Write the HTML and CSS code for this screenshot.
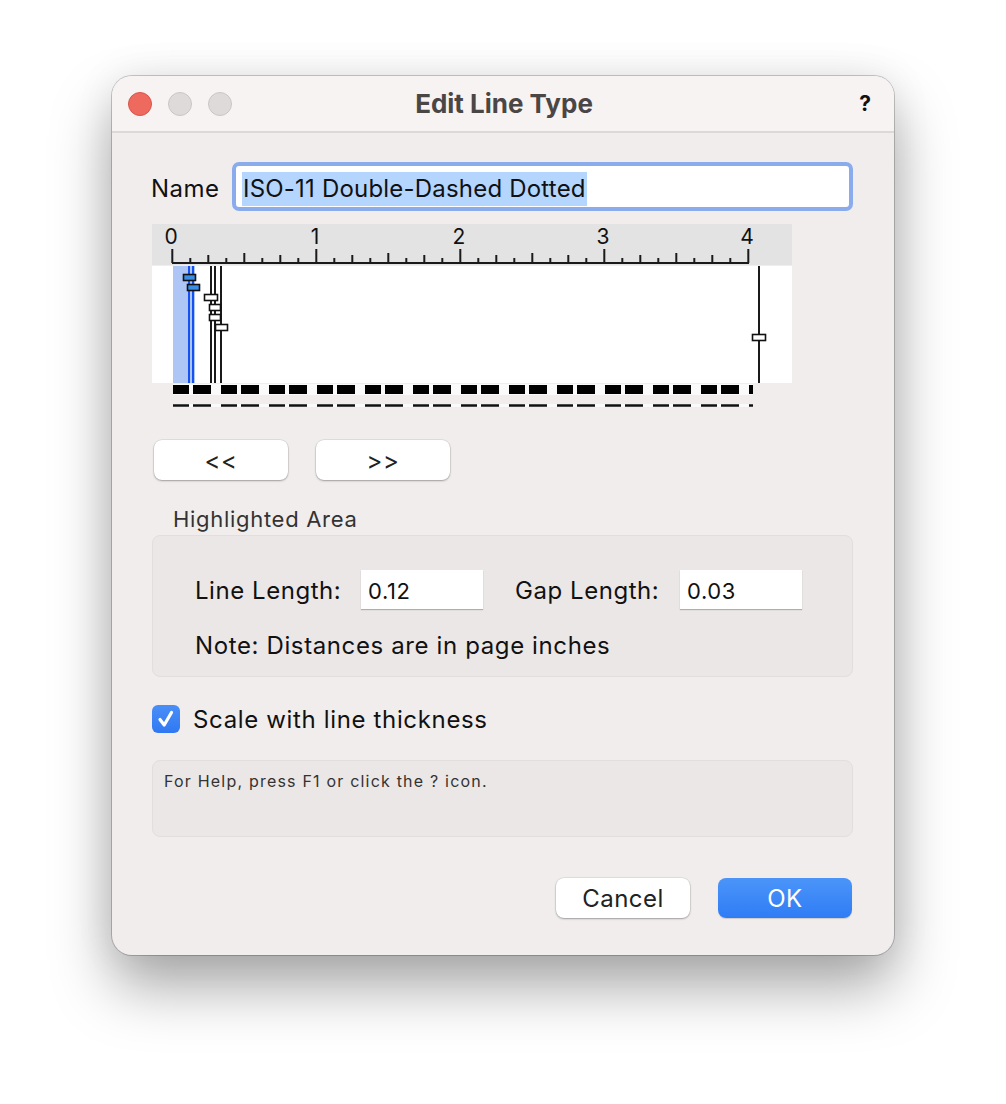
FILE: index.html
```html
<!DOCTYPE html>
<html lang="en">
<head>
    <meta charset="UTF-8">
    <meta name="viewport" content="width=device-width, initial-scale=1.0">
    <title>Edit Line Type</title>
    <link rel="stylesheet" href="styles.css">
</head>
<body>
    <div class="window">
        <div class="titlebar">
            <div class="lights">
                <span class="light red"></span>
                <span class="light"></span>
                <span class="light"></span>
            </div>
            <div class="title">Edit Line Type</div>
            <div class="help-icon">?</div>
        </div>

        <div class="content">
            <div class="name-row">
                <label class="name-label">Name</label>
                <div class="name-field"><span class="selected">ISO-11 Double-Dashed Dotted</span></div>
            </div>

            <!-- ruler and line preview -->
            <svg class="preview" width="640" height="188" viewBox="0 0 640 188">
                <rect x="0" y="0" width="640" height="41" fill="#e3e3e3"/>
                <rect x="0" y="42" width="640" height="117" fill="#ffffff"/>
                <g id="ticks" stroke="#1a1a1a" stroke-width="2"></g>
                <line x1="20" y1="39" x2="597" y2="39" stroke="#1a1a1a" stroke-width="2"/>
                <g font-family="Inter, 'Liberation Sans', sans-serif" font-size="21" fill="#111" text-anchor="middle">
                    <text x="19" y="20">0</text>
                    <text x="163" y="20">1</text>
                    <text x="307" y="20">2</text>
                    <text x="451" y="20">3</text>
                    <text x="595" y="20">4</text>
                </g>

                <rect x="21" y="42" width="22" height="117" fill="#adc6f6"/>
                <line x1="37" y1="42" x2="37" y2="159" stroke="#1550f0" stroke-width="2"/>
                <line x1="41" y1="42" x2="41" y2="159" stroke="#1550f0" stroke-width="2"/>
                <line x1="59" y1="42" x2="59" y2="159" stroke="#1a1a1a" stroke-width="2"/>
                <line x1="63" y1="42" x2="63" y2="159" stroke="#1a1a1a" stroke-width="2"/>
                <line x1="69" y1="42" x2="69" y2="159" stroke="#1a1a1a" stroke-width="2"/>
                <line x1="607" y1="42" x2="607" y2="159" stroke="#1a1a1a" stroke-width="2"/>

                <g stroke="#111" stroke-width="1.6">
                    <rect x="31.5" y="50.5" width="12" height="6" fill="#3a8ee6"/>
                    <rect x="35.5" y="60.5" width="12" height="6" fill="#3a8ee6"/>
                    <rect x="52.5" y="70.5" width="13" height="6" fill="#fff"/>
                    <rect x="57.5" y="80.5" width="11" height="6" fill="#fff"/>
                    <rect x="57.5" y="90.5" width="11" height="6" fill="#fff"/>
                    <rect x="63.5" y="100.5" width="12" height="6" fill="#fff"/>
                    <rect x="600.5" y="110.5" width="13" height="6" fill="#fff"/>
                </g>

                <rect x="21" y="160" width="580" height="11" fill="#fafafa"/>
                <rect x="21" y="180" width="580" height="3" fill="#fafafa"/>
                <line x1="21" y1="165.5" x2="601" y2="165.5" stroke="#000" stroke-width="9" stroke-dasharray="16 4 18 10"/>
                <line x1="21" y1="181.5" x2="601" y2="181.5" stroke="#111" stroke-width="2.4" stroke-dasharray="16 4 18 10"/>
            </svg>

            <div class="nav-row">
                <button class="btn">&lt;&lt;</button>
                <button class="btn">&gt;&gt;</button>
            </div>

            <div class="group-title">Highlighted Area</div>
            <div class="group">
                <div class="field-row">
                    <span class="field-label">Line Length:</span>
                    <div class="num-field">0.12</div>
                    <span class="field-label gap-label">Gap Length:</span>
                    <div class="num-field">0.03</div>
                </div>
                <div class="note">Note: Distances are in page inches</div>
            </div>

            <div class="check-row">
                <span class="checkbox">
                    <svg width="28" height="28" viewBox="0 0 28 28">
                        <path d="M8 14.5 L12.2 20 L19.5 7.5" fill="none" stroke="#fff" stroke-width="3.2" stroke-linecap="round" stroke-linejoin="round"/>
                    </svg>
                </span>
                <span class="check-label">Scale with line thickness</span>
            </div>

            <div class="help-box">For Help, press F1 or click the ? icon.</div>

            <div class="footer">
                <button class="btn">Cancel</button>
                <button class="btn primary">OK</button>
            </div>
        </div>
    </div>

    <script>
        // Draw the ruler ticks, one every 1/8 inch (144px per inch)
        const ticks = document.getElementById('ticks');
        for (let i = 0; i <= 32; i++) {
            const x = 20.3 + i * 18;
            let h = 5;
            if (i % 8 === 0) h = 14;
            else if (i % 4 === 0) h = 10;
            else if (i % 2 === 0) h = 8;
            const line = document.createElementNS('http://www.w3.org/2000/svg', 'line');
            line.setAttribute('x1', x);
            line.setAttribute('x2', x);
            line.setAttribute('y1', 39 - h);
            line.setAttribute('y2', 39);
            ticks.appendChild(line);
        }
    </script>
</body>
</html>
```

FILE: styles.css
```css
html, body {
    margin: 0;
    padding: 0;
    background: #ffffff;
}
body {
    font-family: Inter, "Liberation Sans", sans-serif;
    color: #111;
    min-height: 1104px;
    overflow: hidden;
}
.window {
    width: 782px;
    margin: 76px 0 0 112px;
    background: #f1eded;
    border-radius: 20px;
    box-shadow: 0 0 0 1px rgba(0, 0, 0, 0.2), 0 32px 60px rgba(0, 0, 0, 0.34), 0 0 40px rgba(0, 0, 0, 0.08);
    overflow: hidden;
}
.titlebar {
    height: 55px;
    background: #f7f3f3;
    border-bottom: 2px solid #dcd8d7;
    display: grid;
    grid-template-columns: 1fr auto 1fr;
    align-items: center;
    padding: 0 23px 0 16px;
}
.lights {
    display: flex;
    gap: 16px;
}
.light {
    width: 22px;
    height: 22px;
    border-radius: 50%;
    background: #dedada;
    border: 1px solid #cbc6c6;
}
.light.red {
    background: #ee6a5e;
    border-color: #d8544a;
}
.title {
    font-weight: 700;
    font-size: 26px;
    color: #4b4646;
    padding-left: 9px;
}
.help-icon {
    justify-self: end;
    font-weight: 700;
    font-size: 21px;
    color: #111;
}
.content {
    padding: 29px 41px 37px 40px;
}
.name-row {
    display: flex;
    align-items: center;
    height: 49px;
}
.name-label {
    font-size: 24px;
    letter-spacing: 0.5px;
    width: 81px;
    margin-left: -1px;
    padding-top: 4px;
}
.name-field {
    flex: 1;
    border: 4px solid #8aaced;
    border-radius: 7px;
    background: #fff;
    display: flex;
    align-items: center;
    padding: 4px 0 0 6px;
    box-sizing: border-box;
    height: 49px;
    font-size: 24px;
    letter-spacing: 0.2px;
}
.selected {
    background: #b4d5fe;
    padding: 2px 1px 3px 1px;
}
.preview {
    display: block;
    margin-top: 13px;
}
.nav-row {
    display: flex;
    gap: 28px;
    margin: 28px 0 0 2px;
}
.btn {
    width: 134px;
    height: 40px;
    border: none;
    border-radius: 8px;
    background: #ffffff;
    box-shadow: 0 0 0 0.5px rgba(0, 0, 0, 0.12), 0 1px 2px rgba(0, 0, 0, 0.3);
    font-family: Inter, "Liberation Sans", sans-serif;
    font-size: 24px;
    letter-spacing: 0.5px;
    color: #222;
    padding: 0;
}
.group-title {
    margin: 26px 0 0 21px;
    font-size: 22px;
    letter-spacing: 0.7px;
    color: #333;
    height: 29px;
}
.group {
    height: 142px;
    background: #ebe7e6;
    border: 1px solid #e2dedd;
    border-radius: 8px;
    padding: 34px 0 0 42px;
    box-sizing: border-box;
}
.field-row {
    display: flex;
    align-items: center;
}
.field-label {
    font-size: 24px;
    letter-spacing: 0.55px;
    width: 166px;
    padding-top: 2px;
}
.gap-label {
    width: 165px;
    margin-left: 32px;
}
.num-field {
    width: 122px;
    height: 39px;
    box-sizing: border-box;
    background: #fff;
    box-shadow: 0 1px 1px rgba(0, 0, 0, 0.25);
    font-size: 22px;
    letter-spacing: 0.6px;
    padding: 8px 0 0 7px;
}
.note {
    font-size: 24px;
    letter-spacing: 0.62px;
    margin-top: 22px;
}
.check-row {
    display: flex;
    align-items: center;
    margin-top: 27px;
    height: 30px;
}
.checkbox {
    width: 28px;
    height: 28px;
    border-radius: 6px;
    background: linear-gradient(#4a8ff8, #2f78f2);
    display: block;
}
.checkbox svg {
    display: block;
}
.check-label {
    font-size: 24px;
    letter-spacing: 0.65px;
    margin-left: 13px;
}
.help-box {
    margin-top: 26px;
    height: 77px;
    box-sizing: border-box;
    background: #ebe7e6;
    border: 1px solid #e2dedd;
    border-radius: 8px;
    padding: 10px 11px;
    font-size: 16px;
    letter-spacing: 1.2px;
    color: #333;
}
.footer {
    display: flex;
    justify-content: flex-end;
    gap: 28px;
    margin: 41px 1px 0 0;
}
.btn.primary {
    background: linear-gradient(#4b95f9, #2f7cf5);
    color: #fff;
    box-shadow: 0 1px 1px rgba(0, 0, 0, 0.15);
}
```
